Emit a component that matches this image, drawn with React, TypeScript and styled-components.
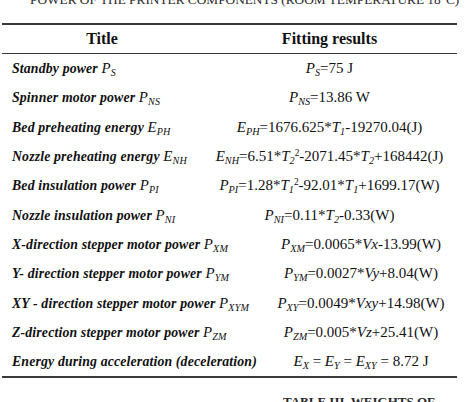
import React from 'react';
import styled, { createGlobalStyle } from 'styled-components';

const GlobalStyle = createGlobalStyle`
  html, body {
    margin: 0;
    padding: 0;
    background: #ffffff;
  }
  body {
    width: 474px;
    height: 402px;
    overflow: hidden;
    font-family: 'Liberation Serif', 'Times New Roman', serif;
    color: #111111;
  }
`;

const Page = styled.div`
  display: flex;
  flex-direction: column;
  width: 474px;
`;

const Caption = styled.div`
  height: 30px;
  margin-top: -7px;
  padding-left: 30px;
  font-size: 13.3px;
  line-height: 14px;
  color: #2a2a2a;
  white-space: nowrap;
`;

const Table = styled.div`
  width: 455px;
  margin-left: 2px;
  border-top: 2px solid #3a3a3a;
  border-bottom: 2px solid #3a3a3a;
`;

const HeaderRow = styled.div`
  display: grid;
  grid-template-columns: 200px 255px;
  height: 28px;
  align-items: center;
  border-bottom: 1.5px solid #3a3a3a;
`;

const HeaderCell = styled.div`
  text-align: center;
  font-size: 16px;
  font-weight: 700;
  line-height: 16px;
`;

const Row = styled.div`
  display: grid;
  grid-template-columns: 200px 255px;
  height: 29.3px;
  align-items: center;
`;

const TitleCell = styled.div`
  padding-left: 10px;
  font-size: 13.8px;
  font-weight: 700;
  font-style: italic;
  line-height: 15px;
  white-space: nowrap;
  letter-spacing: 0.15px;
`;

const ResultCell = styled.div<{ $shift?: number }>`
  padding-left: ${(p) => p.$shift || 0}px;
  text-align: center;
  font-size: 15px;
  line-height: 15px;
  white-space: nowrap;
`;

const Var = styled.span`
  font-style: italic;
  font-weight: 400;
`;

const TitleVar = styled(Var)`
  font-size: 1.08em;
`;

const Sub = styled.sub`
  font-size: 0.68em;
  font-style: italic;
  vertical-align: -0.25em;
  line-height: 0;
`;

const Sup = styled.sup`
  font-size: 0.62em;
  vertical-align: 0.55em;
  line-height: 0;
`;

const FootCaption = styled.div`
  margin-top: 17px;
  padding-left: 283px;
  font-size: 13px;
  line-height: 14px;
  font-weight: 700;
  color: #2a2a2a;
  white-space: nowrap;
`;

const V = ({ n, s }: { n: string; s: string }) => (
  <Var>
    {n}
    <Sub>{s}</Sub>
  </Var>
);

const TV = ({ n, s }: { n: string; s: string }) => (
  <TitleVar>
    {n}
    <Sub>{s}</Sub>
  </TitleVar>
);

type RowData = {
  title: React.ReactNode;
  result: React.ReactNode;
  shift?: number;
};

const rows: RowData[] = [
  {
    title: <>Standby power <TV n="P" s="S" /></>,
    result: <><V n="P" s="S" />=75 J</>,
  },
  {
    title: <>Spinner motor power <TV n="P" s="NS" /></>,
    result: <><V n="P" s="NS" />=13.86 W</>,
  },
  {
    title: <>Bed preheating energy <TV n="E" s="PH" /></>,
    result: <><V n="E" s="PH" />=1676.625*<V n="T" s="1" />-19270.04(J)</>,
  },
  {
    title: <>Nozzle preheating energy <TV n="E" s="NH" /></>,
    result: (
      <>
        <V n="E" s="NH" />=6.51*<V n="T" s="2" /><Sup>2</Sup>-2071.45*<V n="T" s="2" />+168442(J)
      </>
    ),
  },
  {
    title: <>Bed insulation power <TV n="P" s="PI" /></>,
    result: (
      <>
        <V n="P" s="PI" />=1.28*<V n="T" s="1" /><Sup>2</Sup>-92.01*<V n="T" s="1" />+1699.17(W)
      </>
    ),
  },
  {
    title: <>Nozzle insulation power <TV n="P" s="NI" /></>,
    result: <><V n="P" s="NI" />=0.11*<V n="T" s="2" />-0.33(W)</>,
  },
  {
    title: <>X-direction stepper motor power <TV n="P" s="XM" /></>,
    result: <><V n="P" s="XM" />=0.0065*<Var>Vx</Var>-13.99(W)</>,
    shift: 63,
  },
  {
    title: <>Y- direction stepper motor power <TV n="P" s="YM" /></>,
    result: <><V n="P" s="YM" />=0.0027*<Var>Vy</Var>+8.04(W)</>,
    shift: 63,
  },
  {
    title: <>XY - direction stepper motor power <TV n="P" s="XYM" /></>,
    result: <><V n="P" s="XY" />=0.0049*<Var>Vxy</Var>+14.98(W)</>,
    shift: 63,
  },
  {
    title: <>Z-direction stepper motor power <TV n="P" s="ZM" /></>,
    result: <><V n="P" s="ZM" />=0.005*<Var>Vz</Var>+25.41(W)</>,
    shift: 63,
  },
  {
    title: <>Energy during acceleration (deceleration)</>,
    result: (
      <>
        <V n="E" s="X" /> = <V n="E" s="Y" /> = <V n="E" s="XY" /> = 8.72 J
      </>
    ),
    shift: 63,
  },
];

const App: React.FC = () => {
  return (
    <>
      <GlobalStyle />
      <Page>
        <Caption>POWER OF THE PRINTER COMPONENTS (ROOM TEMPERATURE 18°C)</Caption>
        <Table>
          <HeaderRow>
            <HeaderCell>Title</HeaderCell>
            <HeaderCell>Fitting results</HeaderCell>
          </HeaderRow>
          {rows.map((r, i) => (
            <Row key={i}>
              <TitleCell>{r.title}</TitleCell>
              <ResultCell $shift={r.shift}>{r.result}</ResultCell>
            </Row>
          ))}
        </Table>
        <FootCaption>TABLE III. WEIGHTS OF</FootCaption>
      </Page>
    </>
  );
};

export default App;
